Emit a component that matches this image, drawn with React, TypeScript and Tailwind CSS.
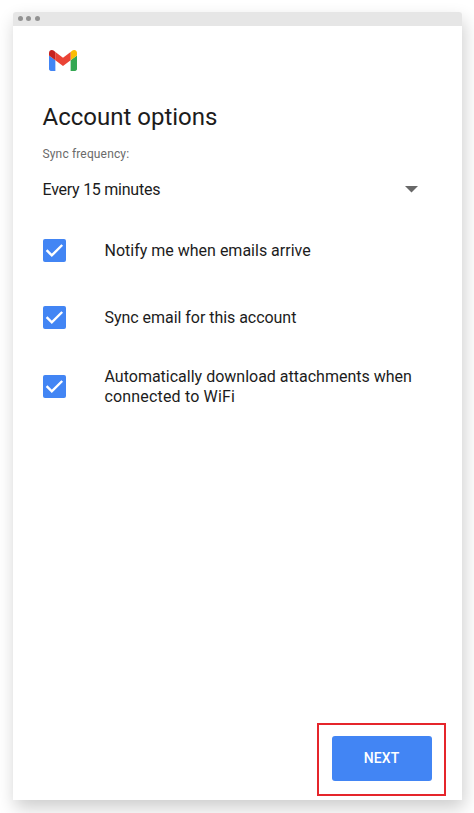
import { FC } from "react";

interface OptionProps {
  lines: { text: string; className: string }[];
  className: string;
}

const GmailLogo: FC = () => (
  <svg viewBox="52 42 88 66" className="h-[21px] w-[28px]">
    <path fill="#4285f4" d="M58 108h14V74L52 59v43c0 3.32 2.69 6 6 6" />
    <path fill="#34a853" d="M120 108h14c3.32 0 6-2.69 6-6V59l-20 15" />
    <path fill="#fbbc04" d="M120 48v26l20-15v-8c0-7.42-8.47-11.65-14.4-7.2" />
    <path fill="#ea4335" d="M72 74V48l24 18 24-18v26L96 92" />
    <path fill="#c5221f" d="M52 51v8l20 15V48l-5.6-4.2c-5.94-4.45-14.4-.22-14.4 7.2" />
  </svg>
);

const Checkbox: FC = () => (
  <span
    role="checkbox"
    aria-checked="true"
    className="flex h-[23px] w-[23px] shrink-0 items-center justify-center rounded-[2px] bg-[#4285f4]"
  >
    <svg viewBox="0 0 23 23" className="h-[23px] w-[23px]">
      <path
        d="M3.6 11.2l5.2 5.2L19.2 6"
        fill="none"
        stroke="#fff"
        strokeWidth="2.4"
      />
    </svg>
  </span>
);

const Option: FC<OptionProps> = ({ lines, className }) => (
  <li className={`flex items-center gap-[39px] ${className}`}>
    <Checkbox />
    <p className="text-[16px] leading-5 whitespace-nowrap text-[#1c1c1c]">
      {lines.map((line) => (
        <span key={line.text} className={`block ${line.className}`}>
          {line.text}
        </span>
      ))}
    </p>
  </li>
);

export default function App() {
  return (
    <div className="h-[813px] w-[474px] overflow-hidden bg-white px-[12.5px] pt-3 font-['Roboto',sans-serif]">
      <div className="flex h-[788px] w-[449px] flex-col rounded-t-[3px] bg-white shadow-[2px_8px_18px_rgba(0,0,0,0.2)]">
        <header className="flex h-[13.5px] shrink-0 items-center gap-[3.3px] rounded-t-[3px] bg-[#e6e6e6] pl-[5.5px]">
          <span className="h-[5px] w-[5px] rounded-full bg-[#929292]" />
          <span className="h-[5px] w-[5px] rounded-full bg-[#929292]" />
          <span className="h-[5px] w-[5px] rounded-full bg-[#929292]" />
        </header>

        <main className="flex grow flex-col pl-[30px]">
          <div className="mt-6 flex h-5 pl-1.5">
            <GmailLogo />
          </div>

          <h1 className="mt-[31.5px] text-2xl leading-8 whitespace-nowrap text-[#1c1c1c]">
            Account options
          </h1>
          <p className="mt-[12.5px] text-xs leading-4 tracking-[0.15px] text-[#6a6a6a]">
            Sync frequency:
          </p>

          <div className="mt-4 flex h-6 items-center justify-between pr-11 text-[#1c1c1c]">
            <span className="text-base tracking-[-0.25px]">Every 15 minutes</span>
            <svg viewBox="0 0 13 7" className="h-[7px] w-[13px]">
              <path d="M0 0h13L6.5 6.5z" fill="#686868" />
            </svg>
          </div>

          <ul className="mt-[37.5px] flex flex-col">
            <Option
              className="h-[23px]"
              lines={[{ text: "Notify me when emails arrive", className: "" }]}
            />
            <Option
              className="mt-11 h-[23px]"
              lines={[
                {
                  text: "Sync email for this account",
                  className: "tracking-[-0.04px]",
                },
              ]}
            />
            <Option
              className="mt-[37.5px] h-10"
              lines={[
                {
                  text: "Automatically download attachments when",
                  className: "",
                },
                { text: "connected to WiFi", className: "tracking-[0.17px]" },
              ]}
            />
          </ul>

          <div className="mt-auto mr-4 mb-[4.5px] flex h-[73px] w-[129px] items-center self-end border-2 border-[#e5252b] pb-0.5 pl-[13px]">
            <button className="h-[45px] w-[100px] rounded-[3px] bg-[#4285f4] text-sm font-medium tracking-[0.1px] text-white">
              NEXT
            </button>
          </div>
        </main>
      </div>
    </div>
  );
}
